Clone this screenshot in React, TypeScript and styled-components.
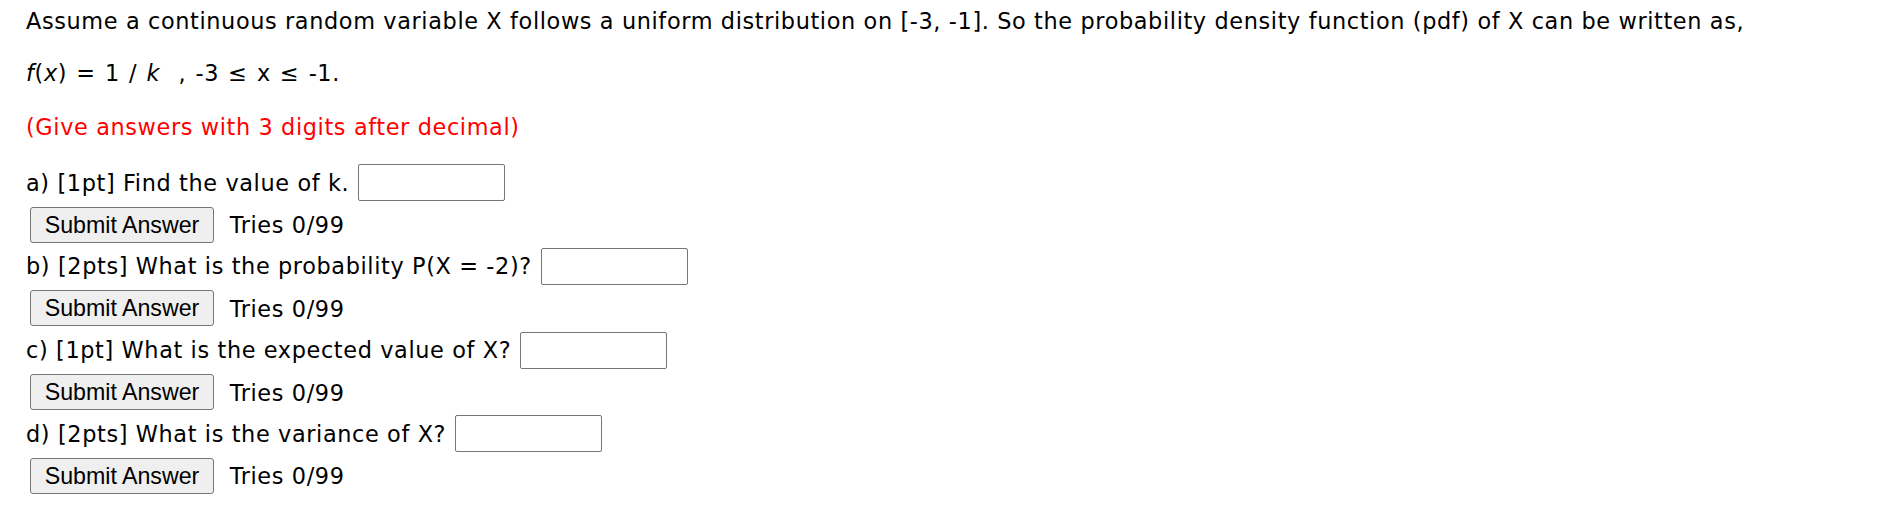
import * as React from "react";
import styled, { createGlobalStyle } from "styled-components";

const GlobalStyle = createGlobalStyle`
  html, body {
    margin: 0;
    padding: 0;
    background: #ffffff;
  }
  body {
    font-family: "DejaVu Sans", Verdana, sans-serif;
    color: #000000;
  }
`;

const Page = styled.div`
  padding: 7.5px 26px 0 26px;
  font-size: 22.4px;
  line-height: 26px;
  letter-spacing: 0.62px;
`;

const Para = styled.p<{ $gap?: number; $red?: boolean; $wide?: boolean }>`
  margin: ${p => p.$gap || 0}px 0 0 0;
  white-space: nowrap;
  word-spacing: ${p => (p.$wide ? "1.5px" : "normal")};
  color: ${p => (p.$red ? "#ff0000" : "#000000")};
`;

const Em = styled.i`
  font-style: italic;
`;

const Questions = styled.div`
  margin-top: 24.1px;
  display: flex;
  flex-direction: column;
  gap: 5.35px;
`;

const QuestionRow = styled.div`
  display: flex;
  align-items: flex-end;
  height: 37px;
`;

const QuestionText = styled.span`
  white-space: nowrap;
  margin-bottom: 5.5px;
`;

const AnswerBox = styled.input.attrs({ type: "text" })`
  box-sizing: border-box;
  width: 147px;
  height: 37px;
  margin: 0 0 0 9px;
  padding: 2px 6px;
  border: 1px solid #767676;
  border-radius: 2px;
  background: #ffffff;
  font-family: "DejaVu Sans", Verdana, sans-serif;
  font-size: 20px;
`;

const SubmitRow = styled.div`
  display: flex;
  align-items: center;
  height: 36px;
  padding-left: 4px;
`;

const SubmitButton = styled.button`
  box-sizing: border-box;
  width: 184px;
  height: 36px;
  margin: 0;
  padding: 0;
  border: 1px solid #767676;
  border-radius: 3px;
  background: #efefef;
  color: #000000;
  font-family: "Liberation Sans", Arial, sans-serif;
  font-size: 23.2px;
  line-height: 26px;
  letter-spacing: 0;
  cursor: pointer;
`;

const Tries = styled.span`
  margin-left: 15.7px;
  padding-top: 1.5px;
  white-space: nowrap;
`;

const questions = [
  "a) [1pt] Find the value of k.",
  "b) [2pts] What is the probability P(X = -2)?",
  "c) [1pt] What is the expected value of X?",
  "d) [2pts] What is the variance of X?",
];

export default function App() {
  return (
    <>
      <GlobalStyle />
      <Page>
        <Para>
          Assume a continuous random variable X follows a uniform distribution on [-3, -1]. So the
          probability density function (pdf) of X can be written as,
        </Para>
        <Para $gap={26.7} $wide>
          <Em>f</Em>(<Em>x</Em>) = 1 / <Em>k</Em>&nbsp;&nbsp;, -3 ≤ x ≤ -1.
        </Para>
        <Para $gap={28} $red>
          (Give answers with 3 digits after decimal)
        </Para>
        <Questions>
          {questions.map(q => (
            <React.Fragment key={q}>
              <QuestionRow>
                <QuestionText>{q}</QuestionText>
                <AnswerBox />
              </QuestionRow>
              <SubmitRow>
                <SubmitButton>Submit Answer</SubmitButton>
                <Tries>Tries 0/99</Tries>
              </SubmitRow>
            </React.Fragment>
          ))}
        </Questions>
      </Page>
    </>
  );
}
